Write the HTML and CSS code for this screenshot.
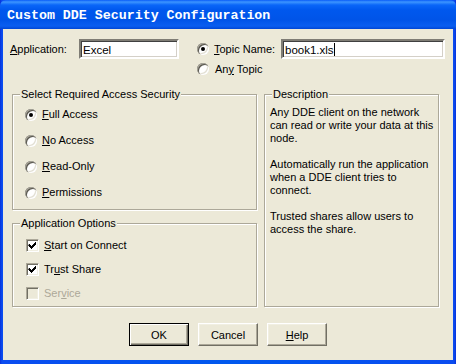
FILE: index.html
```html
<!DOCTYPE html>
<html>
<head>
<meta charset="utf-8">
<link rel="stylesheet" href="styles.css">
</head>
<body>
<div class="window">
  <div class="titlebar"><span class="title">Custom DDE Security Configuration</span></div>
  <div class="client">
    <div class="row1">
      <span class="lbl app-lbl"><u>A</u>pplication:</span>
      <div class="textbox app-box">Excel</div>
      <span class="radio on topic-radio"></span>
      <span class="lbl topic-lbl"><u>T</u>opic Name:</span>
      <div class="textbox topic-box">book1.xls<span class="caret"></span></div>
    </div>
    <div class="row2">
      <span class="radio"></span>
      <span class="lbl">An<u>y</u> Topic</span>
    </div>
    <div class="main">
      <div class="leftcol">
        <div class="group g1">
          <div class="legend">Select Required Access Security</div>
          <div class="opt first"><span class="radio on"></span><span class="lbl"><u>F</u>ull Access</span></div>
          <div class="opt"><span class="radio"></span><span class="lbl"><u>N</u>o Access</span></div>
          <div class="opt"><span class="radio"></span><span class="lbl"><u>R</u>ead-Only</span></div>
          <div class="opt"><span class="radio"></span><span class="lbl"><u>P</u>ermissions</span></div>
        </div>
        <div class="group g2">
          <div class="legend">Application Options</div>
          <div class="chk-opt first"><span class="check"><svg width="11" height="11" viewBox="0 0 11 11"><path d="M2 4h1v1h1v1h1v-1h1v-1h1v-1h1v-1h1v3h-1v1h-1v1h-1v1h-1v1h-1v-1h-1v-1h-1v-1h-1z" fill="#000"/></svg></span><span class="lbl"><u>S</u>tart on Connect</span></div>
          <div class="chk-opt"><span class="check"><svg width="11" height="11" viewBox="0 0 11 11"><path d="M2 4h1v1h1v1h1v-1h1v-1h1v-1h1v-1h1v3h-1v1h-1v1h-1v1h-1v1h-1v-1h-1v-1h-1v-1h-1z" fill="#000"/></svg></span><span class="lbl">Tr<u>u</u>st Share</span></div>
          <div class="chk-opt disabled"><span class="check"></span><span class="lbl">Ser<u>v</u>ice</span></div>
        </div>
      </div>
      <div class="group desc">
        <div class="legend">Description</div>
        <p>Any DDE client on the network can read or write your data at this node.</p>
        <p>Automatically run the application when a DDE client tries to connect.</p>
        <p>Trusted shares allow users to access the share.</p>
      </div>
    </div>
    <div class="buttons">
      <div class="btn default"><span>OK</span></div>
      <div class="btn"><span>Cancel</span></div>
      <div class="btn"><span><u>H</u>elp</span></div>
    </div>
  </div>
</div>
</body>
</html>
```

FILE: styles.css
```css
* { box-sizing: border-box; }
html, body { margin: 0; padding: 0; }
body {
  width: 456px; height: 364px; overflow: hidden;
  font-family: "Liberation Sans", Arial, sans-serif;
  font-size: 11px; color: #000;
}
.window {
  width: 456px; height: 364px;
  display: flex; flex-direction: column;
  background: linear-gradient(to right, #0831d9 0, #0a4cf0 2px, #0058ee 50%, #0a4cf0 calc(100% - 2px), #0831d9 100%);
}
.titlebar {
  height: 29px;
  flex: none;
  background: linear-gradient(to bottom, #0a5cf8 0, #3d95ff 2px, #0a66f8 5px, #0058ee 10px, #0054e8 20px, #0a5ef0 26px, #0046d5 29px);
  border-radius: 6px 6px 0 0;
  display: flex; align-items: center;
  padding-left: 7px;
}
.title {
  font-family: "Liberation Mono", "DejaVu Sans Mono", monospace;
  font-weight: bold; font-size: 13.3px; color: #fff;
  margin-top: 2px;
}
.client {
  flex: 1;
  margin: 0 3px 4px 3px;
  background: #ece9d8;
  padding: 10px 8px 0 7px;
  display: flex; flex-direction: column;
}
.lbl { white-space: nowrap; line-height: 13px; }
u { text-decoration: underline; text-underline-offset: 1px; }
.row1 { display: flex; align-items: center; height: 20px; }
.app-lbl { width: 69px; }
.textbox {
  height: 20px; background: #fff;
  border-style: solid; border-width: 2px;
  border-color: #7f7d75 #fff #fff #7f7d75;
  box-shadow: inset 1px 1px 0 #404040, inset -1px -1px 0 #d4d0c8;
  padding: 2px 0 0 2px; line-height: 14px; font-size: 11.5px;
  white-space: nowrap;
}
.app-box { width: 100px; }
.topic-radio { margin-left: 18px; }
.topic-lbl { width: 67px; margin-left: 5px; }
.topic-box { flex: 1; }
.caret { display: inline-block; width: 1px; height: 13px; background: #000; vertical-align: -2px; }
.row2 { display: flex; align-items: center; margin: 3px 0 0 187px; height: 14px; }
.row2 .lbl { margin-left: 6px; }
.radio {
  flex: none; display: inline-block; width: 12px; height: 12px; border-radius: 50%;
  background: #fff;
  box-shadow: inset 1px 1px 0 #a9a69a, inset 2px 2px 0 #5a5850, inset -1px -1px 0 #fff, inset -2px -2px 0 #e2dfd3;
  position: relative;
}
.radio.on::after {
  content: ""; position: absolute; left: 4px; top: 4px; width: 4px; height: 4px; border-radius: 50%; background: #000;
}
.main {
  display: grid; grid-template-columns: 245px 175px; column-gap: 7px;
  margin: 18px 0 0 2px;
}
.leftcol { display: flex; flex-direction: column; gap: 13px; }
.group {
  border: 1px solid #aca899;
  box-shadow: 1px 1px 0 #fff, inset 1px 1px 0 #fff;
  padding: 0;
  display: flex; flex-direction: column; align-items: flex-start;
}
.legend {
  background: #ece9d8;
  margin: -7px 0 0 7px; padding: 0 1px; line-height: 13px; white-space: nowrap;
}
.g1 { height: 116px; }
.opt { display: flex; align-items: center; height: 13px; margin-left: 12px; margin-top: 13px; }
.opt.first { margin-top: 7px; }
.opt .lbl { margin-left: 5px; }
.g2 { height: 84px; }
.chk-opt { display: flex; align-items: center; height: 13px; margin-left: 13px; margin-top: 11px; }
.chk-opt.first { margin-top: 9px; }
.chk-opt .lbl { margin-left: 5px; }
.check {
  flex: none; width: 13px; height: 13px; background: #fff;
  border-style: solid; border-width: 1px; border-color: #aca899 #fff #fff #aca899;
  box-shadow: inset 1px 1px 0 #716f64, inset -1px -1px 0 #f1efe2;
  display: flex;
}
.check svg { display: block; }
.disabled .check { background: #ece9d8; }
.disabled .lbl { color: #aca899; }
.desc { height: 213px; }
.desc p { margin: 3px 2px 0 5px; line-height: 13px; }
.desc .legend + p { margin-top: 5px; }
.desc p + p { margin-top: 13px; }
.buttons { display: flex; gap: 9px; margin: 16px 0 0 119px; }
.btn {
  width: 60px; height: 23px; background: #ece9d8;
  border-style: solid; border-width: 1px;
  border-color: #fff #716f64 #716f64 #fff;
  box-shadow: inset -1px -1px 0 #aca899, inset 1px 1px 0 #f1efe2;
  display: flex; align-items: center; justify-content: center;
}
.btn.default {
  border: 1px solid #000;
  box-shadow: inset 1px 1px 0 #fff, inset -1px -1px 0 #716f64, inset -2px -2px 0 #aca899;
}
```
